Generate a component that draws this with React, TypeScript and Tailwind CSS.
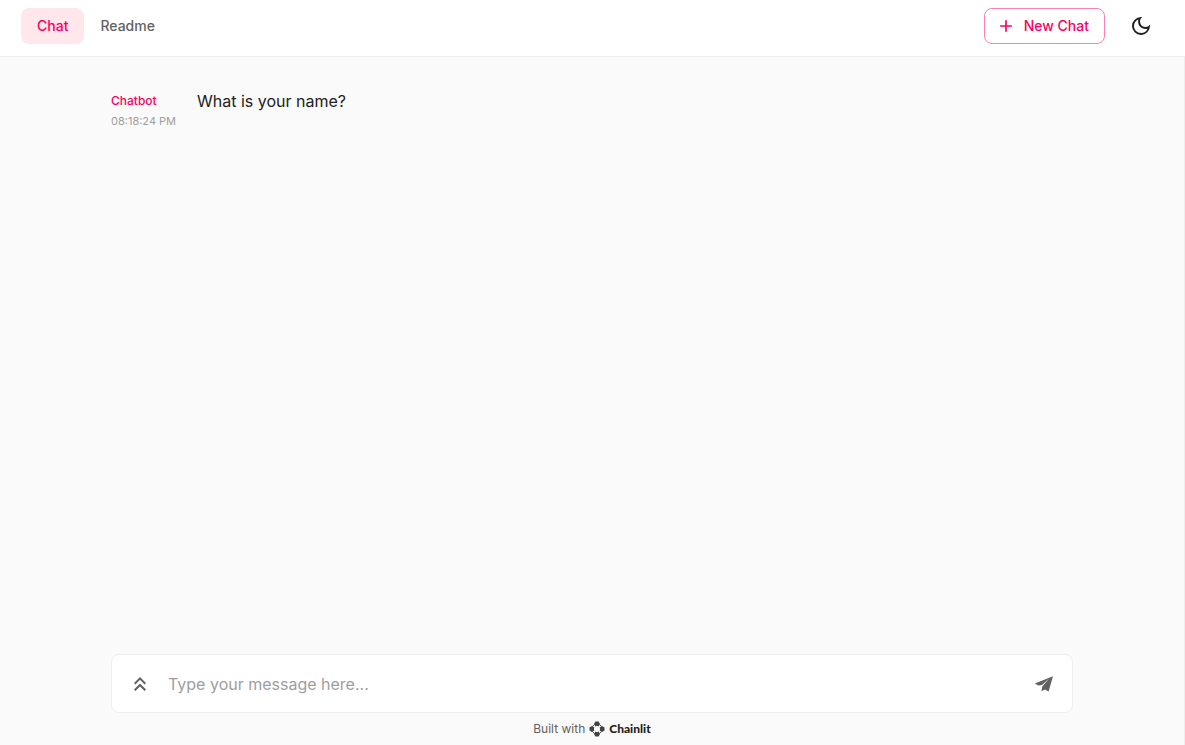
import { useState } from 'react';
import { MdAdd, MdKeyboardDoubleArrowUp, MdOutlineDarkMode } from 'react-icons/md';

const messages = [{ id: 1, author: 'Chatbot', time: '08:18:24 PM', content: 'What is your name?' }];

function SendIcon() {
  return (
    <svg className="h-6 w-6" viewBox="0 0 24 24" fill="currentColor" aria-hidden="true">
      <path d="M21 4.2 2.8 11.4l3.6 2.2L10 13l7-6.2-6.6 7.4-1 5 3.6-1.8 3.6 2.2z" />
    </svg>
  );
}

function ChainlitLogo() {
  return (
    <svg className="h-4 w-4 text-[#424242]" viewBox="0 0 16 16" aria-hidden="true">
      <g fill="currentColor">
        <path id="petal" d="M6.4 0.5h3.2L11 3 9.6 5.4 8 4.8l-1.6.6L5 3z" />
        <use href="#petal" transform="rotate(90 8 8)" />
        <use href="#petal" transform="rotate(180 8 8)" />
        <use href="#petal" transform="rotate(270 8 8)" />
      </g>
      <path d="M3.4 5.4 5.6 3.4M10.4 3.4l2.2 2M12.6 10.6l-2.2 2M5.6 12.6l-2.2-2" stroke="currentColor" />
    </svg>
  );
}

export default function App() {
  const [input, setInput] = useState('');

  return (
    <div className="flex min-h-screen flex-col border-r border-[#eeeeee] bg-[#fafafa] font-['Inter',sans-serif] text-[#212121]">
      <header className="-mr-px flex h-[57px] items-start justify-between border-b border-[#eeeeee] bg-white pt-2 pr-6 pl-[21px]">
        <nav className="flex text-sm font-medium">
          <a href="#chat" className="flex h-9 items-center rounded-lg bg-[#ffe7eb] px-4 text-[#f80061]">
            Chat
          </a>
          <a href="#readme" className="flex h-9 items-center px-4 text-[#616161]">
            Readme
          </a>
        </nav>
        <div className="flex items-center gap-[16px]">
          <button
            type="button"
            className="flex h-9 items-center gap-2 rounded-lg border border-[#fb7fb0] px-[15px] text-sm font-medium text-[#f80061]"
          >
            <MdAdd className="-ml-1 h-5 w-5" />
            New Chat
          </button>
          <button type="button" aria-label="Toggle dark mode" className="flex h-9 w-10 items-center justify-center">
            <MdOutlineDarkMode className="h-6 w-6" />
          </button>
        </div>
      </header>

      <main className="mx-auto flex w-full max-w-[1010px] flex-1 flex-col px-6">
        <div className="flex-1 pt-9">
          {messages.map((message) => (
            <div key={message.id} className="flex">
              <div className="w-[86px] shrink-0">
                <div className="text-xs leading-4 font-medium text-[#f80061]">{message.author}</div>
                <div className="mt-1 text-[11px] leading-4 text-[#9e9e9e]">{message.time}</div>
              </div>
              <p className="text-base leading-4">{message.content}</p>
            </div>
          ))}
        </div>

        <form
          className="flex h-[59px] items-center rounded-lg border border-[#eeeeee] bg-white px-4"
          onSubmit={(e) => e.preventDefault()}
        >
          <button type="button" aria-label="Show history" className="text-[#616161]">
            <MdKeyboardDoubleArrowUp className="h-6 w-6" />
          </button>
          <input
            autoFocus
            aria-label="Message"
            className="ml-4 h-6 min-w-0 flex-1 bg-transparent text-base placeholder-[#9e9e9e] outline-none"
            placeholder="Type your message here..."
            value={input}
            onChange={(e) => setInput(e.target.value)}
          />
          <button type="submit" aria-label="Send" className="text-[#616161]">
            <SendIcon />
          </button>
        </form>

        <footer className="flex h-8 items-center justify-center">
          <a href="#chainlit" className="flex items-center gap-1 text-xs text-[#616161]">
            Built with
            <ChainlitLogo />
            <span className="font-['Lato',sans-serif] font-black text-[#212121]">Chainlit</span>
          </a>
        </footer>
      </main>
    </div>
  );
}
